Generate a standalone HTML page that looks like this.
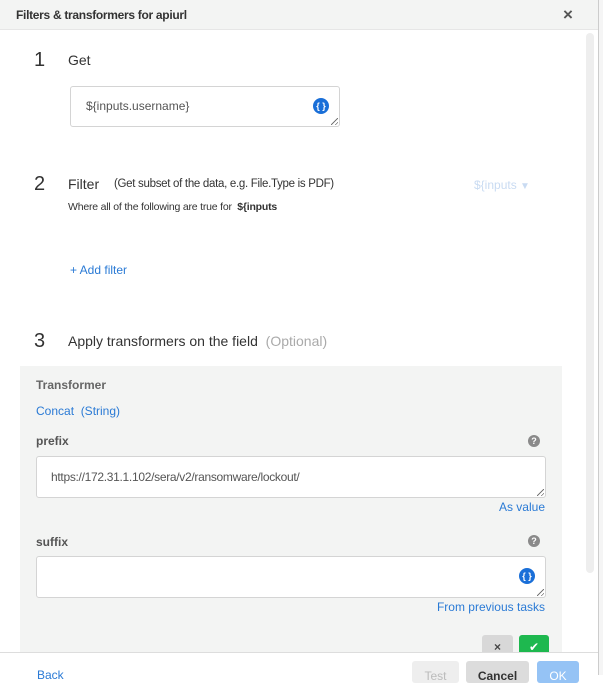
<!DOCTYPE html>
<html><head><style>
*{box-sizing:border-box;margin:0;padding:0}
body{width:603px;height:675px;overflow:hidden;background:#fff;font-family:"Liberation Sans",sans-serif;position:relative;color:#333}
.a{position:absolute}
.hdr{left:0;top:0;width:598px;height:30px;background:#f3f4f3;border-bottom:1px solid #e6e6e6}
.num{font-size:20px;color:#333}
.ttl{font-size:14px;color:#333}
.inp{background:#fff;border:1px solid #d4d4d4;border-radius:3px}
.ic{width:16px;height:16px;border-radius:50%;background:#1a6fd8;color:#fff;font-size:9px;font-weight:bold;text-align:center;line-height:16px}
.lnk{color:#2a7ad5;font-size:12px}
.q{width:12px;height:12px;border-radius:50%;background:#8a8a8a;color:#fff;font-size:9px;font-weight:bold;text-align:center;line-height:12px}
.rs{width:7px;height:7px;background:linear-gradient(135deg,transparent 45%,#777 46%,#777 54%,transparent 55%,transparent 75%,#777 76%,#777 84%,transparent 85%)}
.btn{border-radius:3px;height:22px;font-size:12px;text-align:center;line-height:30px}
.r{text-align:right}
</style></head><body>
<div class="a hdr"></div>
<div class="a" style="left:16px;top:8px;font-size:12px;font-weight:bold;color:#333;letter-spacing:-0.3px">Filters &amp; transformers for apiurl</div>
<div class="a" style="left:563px;top:5px;font-size:17px;font-weight:bold;color:#555">×</div>
<div class="a" style="left:598px;top:0;width:5px;height:675px;background:#f5f5f5;border-left:1px solid #ccc"></div>
<div class="a" style="left:586px;top:33px;width:8px;height:540px;background:#eeeeee;border-radius:4px"></div>

<div class="a num" style="left:34px;top:49px">1</div>
<div class="a ttl" style="left:68px;top:52px">Get</div>
<div class="a inp" style="left:70px;top:86px;width:270px;height:41px"></div>
<div class="a" style="left:86px;top:99px;font-size:12px;color:#555">${inputs.username}</div>
<div class="a ic" style="left:313px;top:98px">{ }</div>
<div class="a rs" style="left:331px;top:118px"></div>

<div class="a num" style="left:34px;top:173px">2</div>
<div class="a ttl" style="left:68px;top:176px">Filter</div>
<div class="a" style="left:114px;top:178px;font-size:11.5px;color:#333;letter-spacing:-0.3px">(Get subset of the data, e.g. File.Type is PDF)</div>
<div class="a" style="left:474px;top:178px;font-size:12px;color:#c9dbf2">${inputs <span style="font-size:10px">▼</span></div>
<div class="a" style="left:68px;top:201px;font-size:10.5px;color:#333;letter-spacing:-0.2px">Where all of the following are true for &nbsp;<b>${inputs</b></div>
<div class="a lnk" style="left:70px;top:263px">+ Add filter</div>

<div class="a num" style="left:34px;top:330px">3</div>
<div class="a ttl" style="left:68px;top:333px">Apply transformers on the field <span style="color:#aaa">&nbsp;(Optional)</span></div>

<div class="a" style="left:20px;top:366px;width:542px;height:290px;background:#f3f4f3"></div>
<div class="a" style="left:36px;top:378px;font-size:12px;font-weight:bold;color:#666">Transformer</div>
<div class="a lnk" style="left:36px;top:404px">Concat&nbsp; (String)</div>
<div class="a" style="left:36px;top:434px;font-size:12px;font-weight:bold;color:#555">prefix</div>
<div class="a q" style="left:528px;top:435px">?</div>
<div class="a inp" style="left:36px;top:456px;width:510px;height:42px"></div>
<div class="a" style="left:51px;top:470px;font-size:12px;color:#555;letter-spacing:-0.3px">https://172.31.1.102/sera/v2/ransomware/lockout/</div>
<div class="a rs" style="left:537px;top:489px"></div>
<div class="a lnk r" style="left:400px;top:500px;width:145px">As value</div>
<div class="a" style="left:36px;top:535px;font-size:12px;font-weight:bold;color:#555">suffix</div>
<div class="a q" style="left:528px;top:535px">?</div>
<div class="a inp" style="left:36px;top:556px;width:510px;height:42px"></div>
<div class="a ic" style="left:519px;top:568px">{ }</div>
<div class="a rs" style="left:537px;top:589px"></div>
<div class="a lnk r" style="left:400px;top:600px;width:145px">From previous tasks</div>
<div class="a" style="left:482px;top:635px;width:31px;height:24px;background:#d8d8d8;border-radius:3px;text-align:center;font-size:12px;font-weight:bold;line-height:24px;color:#444">×</div>
<div class="a" style="left:519px;top:635px;width:30px;height:24px;background:#1eb84f;border-radius:3px;text-align:center;font-size:12px;line-height:24px;color:#fff">✔</div>

<div class="a" style="left:0;top:652px;width:598px;height:23px;background:#fff;border-top:1px solid #ddd"></div>
<div class="a lnk" style="left:37px;top:668px">Back</div>
<div class="a btn" style="left:412px;top:661px;width:47px;background:#eeeeee;color:#bbb">Test</div>
<div class="a btn" style="left:466px;top:661px;width:63px;background:#dcdcdc;color:#333;font-weight:bold">Cancel</div>
<div class="a btn" style="left:537px;top:661px;width:42px;background:#95c3f5;color:#fff">OK</div>
</body></html>
